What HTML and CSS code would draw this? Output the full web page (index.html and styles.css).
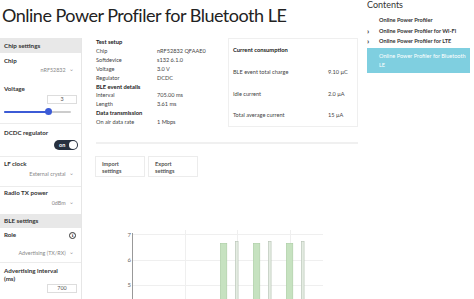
FILE: index.html
```html
<!DOCTYPE html>
<html lang="en">
<head>
    <meta charset="UTF-8">
    <title>Online Power Profiler for Bluetooth LE</title>
    <link rel="stylesheet" href="styles.css">
</head>
<body>

<div class="page">
    <div class="main">
        <h1 class="title">Online Power Profiler for Bluetooth LE</h1>

        <div class="content">
            <aside class="sidebar">
                <div class="sb-head">Chip settings</div>
                <div class="sb-group g-chip">
                    <div class="sb-label">Chip</div>
                    <div class="sb-select">nRF52832 <span class="caret">&#8964;</span></div>
                    <div class="sb-label l-voltage">Voltage</div>
                    <div class="sb-input">3</div>
                    <div class="slider">
                        <span class="slider-fill"></span>
                        <span class="slider-knob"></span>
                    </div>
                </div>
                <div class="sb-group g-dcdc">
                    <div class="sb-label">DCDC regulator</div>
                    <div class="toggle"><span class="toggle-text">on</span><span class="toggle-knob"></span></div>
                </div>
                <div class="sb-group g-lf">
                    <div class="sb-label">LF clock</div>
                    <div class="sb-select">External crystal <span class="caret">&#8964;</span></div>
                </div>
                <div class="sb-group g-radio">
                    <div class="sb-label">Radio TX power</div>
                    <div class="sb-select">0dBm <span class="caret">&#8964;</span></div>
                </div>
                <div class="sb-head sb-head-ble">BLE settings</div>
                <div class="sb-group g-role">
                    <div class="sb-label label-row">Role <span class="info">i</span></div>
                    <div class="sb-select s-role">Advertising (TX/RX) <span class="caret">&#8964;</span></div>
                </div>
                <div class="sb-group g-adv">
                    <div class="sb-label two-line">Advertising interval (ms)</div>
                    <div class="sb-input">700</div>
                </div>
            </aside>

            <section class="panel">
                <div class="tables">
                    <table class="setup">
                        <tr><th colspan="2">Test setup</th></tr>
                        <tr><td>Chip</td><td>nRF52832 QFAAE0</td></tr>
                        <tr><td>Softdevice</td><td>s132 6.1.0</td></tr>
                        <tr><td>Voltage</td><td>3.0 V</td></tr>
                        <tr><td>Regulator</td><td>DCDC</td></tr>
                        <tr><th colspan="2">BLE event details</th></tr>
                        <tr><td>Interval</td><td>705.00 ms</td></tr>
                        <tr><td>Length</td><td>3.61 ms</td></tr>
                        <tr><th colspan="2">Data transmission</th></tr>
                        <tr><td>On air data rate</td><td>1 Mbps</td></tr>
                    </table>

                    <div class="current">
                        <div class="cur-row cur-head">Current consumption</div>
                        <div class="cur-row"><span>BLE event total charge</span><span class="cur-val">9.10 &micro;C</span></div>
                        <div class="cur-row"><span>Idle current</span><span class="cur-val">2.0 &micro;A</span></div>
                        <div class="cur-row"><span>Total average current</span><span class="cur-val">15 &micro;A</span></div>
                    </div>
                </div>

                <div class="divider"></div>

                <div class="buttons">
                    <div class="btn">Import<br>settings</div>
                    <div class="btn">Export<br>settings</div>
                </div>

                <div class="chart">
                    <svg width="240" height="70" viewBox="0 0 240 70">
                        <g stroke="#efefef" stroke-width="1">
                            <line x1="13" y1="4.5" x2="203" y2="4.5"/>
                            <line x1="13" y1="30.5" x2="203" y2="30.5"/>
                            <line x1="13" y1="55.5" x2="203" y2="55.5"/>
                            <line x1="65.5" y1="0" x2="65.5" y2="70"/>
                            <line x1="117.5" y1="0" x2="117.5" y2="70"/>
                            <line x1="170.5" y1="0" x2="170.5" y2="70"/>
                        </g>
                        <line x1="12.5" y1="3" x2="12.5" y2="70" stroke="#999" stroke-width="1"/>
                        <g font-family="Lato, sans-serif" font-size="6" fill="#666" text-anchor="end">
                            <text x="11" y="7">7</text>
                            <text x="11" y="32">6</text>
                            <text x="11" y="57">5</text>
                        </g>
                        <g fill="#c6e2c0" stroke="#a9cba2" stroke-width="0.6">
                            <rect x="100.3" y="13.3" width="6.5" height="60"/>
                            <rect x="133.3" y="13.3" width="6.5" height="60"/>
                            <rect x="166.3" y="13.3" width="6.5" height="60"/>
                        </g>
                        <g fill="#e4ece2" stroke="#b5c2b3" stroke-width="0.6">
                            <rect x="115.3" y="11.3" width="2.8" height="60"/>
                            <rect x="148.3" y="11.3" width="2.8" height="60"/>
                            <rect x="181.3" y="11.3" width="2.8" height="60"/>
                        </g>
                    </svg>
                </div>
            </section>
        </div>
    </div>

    <nav class="toc">
        <div class="toc-title">Contents</div>
        <ul class="toc-list">
            <li>Online Power Profiler</li>
            <li class="has-sub">Online Power Profiler for Wi-Fi</li>
            <li class="has-sub">Online Power Profiler for LTE</li>
            <li class="active">Online Power Profiler for Bluetooth LE</li>
        </ul>
    </nav>
</div>

</body>
</html>
```

FILE: styles.css
```css
body {
    margin: 0;
    font-family: Lato, "Noto Sans", sans-serif;
    color: #333;
    background-color: #fff;
}
.page {
    display: flex;
    width: 474px;
    height: 299px;
    overflow: hidden;
}
.main {
    width: 362px;
    flex-shrink: 0;
}
.title {
    margin: 0;
    padding: 4px 0 0 2px;
    height: 34px;
    box-sizing: border-box;
    font-size: 18px;
    line-height: 22px;
    font-weight: 400;
    color: #222;
    letter-spacing: -0.5px;
    white-space: nowrap;
}
.content {
    display: flex;
    margin-top: 4px;
}

/* sidebar */
.sidebar {
    width: 81px;
    border-right: 1px solid #e6e6e6;
    font-size: 6px;
}
.sb-head {
    height: 15px;
    line-height: 15px;
    padding-left: 4px;
    background-color: #e8e8e8;
    font-weight: 700;
    font-size: 6.3px;
    color: #333;
}
.sb-head-ble {
    height: 14px;
    line-height: 14px;
}
.sb-group {
    display: flex;
    flex-direction: column;
    padding: 0 4px 0 4px;
    border-bottom: 1px solid #ececec;
}
.sb-label {
    height: 10px;
    line-height: 10px;
    font-weight: 700;
    font-size: 6.2px;
    color: #333;
}
.sb-select {
    height: 9px;
    line-height: 9px;
    text-align: right;
    color: #888;
    font-size: 5.4px;
    padding-right: 3px;
}
.caret {
    display: inline-block;
    margin-left: 2px;
    font-size: 6px;
    line-height: 4px;
    vertical-align: 1px;
    color: #999;
}
.sb-input {
    align-self: flex-end;
    width: 30px;
    height: 9px;
    box-sizing: border-box;
    border: 1px solid #ddd;
    line-height: 7px;
    text-align: center;
    font-size: 5.4px;
    color: #555;
}
.g-chip { padding-top: 3px; padding-bottom: 7px; }
.l-voltage { margin-top: 9px; }
.g-chip .sb-input { margin-top: 1px; }
.slider {
    position: relative;
    margin-top: 7px;
    height: 2px;
    width: 67px;
    background-color: #ccc;
    border-radius: 1px;
    margin-bottom: 3px;
}
.slider-fill {
    display: block;
    width: 44px;
    height: 2px;
    background-color: #3c5bd6;
    border-radius: 1px;
}
.slider-knob {
    position: absolute;
    left: 41px;
    top: -3px;
    width: 7px;
    height: 7px;
    border-radius: 50%;
    background-color: #3c5bd6;
}
.g-dcdc { padding-top: 4px; padding-bottom: 6px; }
.toggle {
    align-self: flex-end;
    margin-top: 2px;
    margin-right: -1px;
    width: 24px;
    height: 10px;
    box-sizing: border-box;
    border-radius: 5px;
    background-color: #27303f;
    display: flex;
    align-items: center;
    justify-content: space-between;
    padding: 0 1px 0 5px;
}
.toggle-text {
    color: #fff;
    font-size: 5.5px;
    font-weight: 700;
}
.toggle-knob {
    width: 8px;
    height: 8px;
    border-radius: 50%;
    background-color: #fff;
}
.g-lf { padding-top: 2px; padding-bottom: 8px; }
.g-lf .sb-select { margin-top: 1px; height: 8px; line-height: 8px; }
.g-radio { padding-top: 1px; padding-bottom: 7px; border-bottom: none; }
.g-radio .sb-select { margin-top: 1px; height: 8px; line-height: 8px; }
.g-role { padding-top: 2px; padding-bottom: 5px; }
.label-row {
    display: flex;
    justify-content: space-between;
    align-items: center;
}
.info {
    width: 7px;
    height: 7px;
    box-sizing: border-box;
    border: 1px solid #333;
    border-radius: 50%;
    font-size: 4.5px;
    line-height: 5px;
    text-align: center;
    font-family: "DejaVu Serif", serif;
    font-weight: 700;
    margin-right: 1px;
}
.s-role { margin-top: 9px; height: 8px; line-height: 8px; }
.g-adv { padding-top: 4px; border-bottom: none; }
.two-line {
    height: 16px;
    line-height: 8px;
    width: 66px;
}
.g-adv .sb-input { margin-top: 1px; }

/* panel */
.panel {
    margin-left: 13px;
    width: 263px;
}
.tables {
    display: flex;
    justify-content: space-between;
}
.setup {
    border-collapse: collapse;
    margin-left: 1px;
    width: 130px;
    font-size: 5.6px;
    color: #444;
}
.setup th, .setup td {
    padding: 0;
    height: 8.75px;
    line-height: 8.75px;
    text-align: left;
    white-space: nowrap;
}
.setup th {
    font-weight: 700;
    color: #222;
    font-size: 5.8px;
}
.setup td:first-child {
    width: 61px;
}
.current {
    width: 130px;
    height: 89px;
    box-sizing: border-box;
    border: 1px solid #efefef;
    padding: 0 4px;
    font-size: 5.6px;
    color: #444;
}
.cur-row {
    height: 21.8px;
    line-height: 21.8px;
    display: flex;
    justify-content: space-between;
}
.cur-head {
    font-weight: 700;
    color: #222;
    font-size: 5.8px;
}
.cur-val {
    width: 25px;
}
.divider {
    margin: 15px 0 0 1px;
    height: 2px;
    background-color: #f0f0f0;
}
.buttons {
    display: flex;
    gap: 3px;
    margin-top: 12px;
}
.btn {
    width: 50px;
    height: 21px;
    box-sizing: border-box;
    border: 1px solid #ececec;
    padding: 3px 0 0 6px;
    font-size: 5.6px;
    line-height: 7px;
    font-weight: 700;
    color: #555;
}
.chart {
    margin: 53px 0 0 25px;
    height: 70px;
}
.chart svg {
    display: block;
}

/* table of contents */
.toc {
    padding-left: 5px;
    width: 106px;
}
.toc-title {
    font-size: 9px;
    line-height: 10px;
    color: #333;
    margin-top: 0;
}
.toc-list {
    list-style: none;
    margin: 5px 0 0 0;
    padding: 0;
    font-size: 5.6px;
    font-weight: 700;
    color: #333;
}
.toc-list li {
    position: relative;
    padding-left: 12px;
    line-height: 10.5px;
}
.toc-list .has-sub::before {
    content: "\203A";
    position: absolute;
    left: 0;
    top: 0;
    font-size: 8px;
}
.toc-list .active {
    margin-top: 1px;
    width: 103px;
    box-sizing: border-box;
    background-color: #7fcfe0;
    color: #fff;
    padding: 3px 4px 3px 12px;
    line-height: 9.5px;
    font-weight: 400;
}
```
